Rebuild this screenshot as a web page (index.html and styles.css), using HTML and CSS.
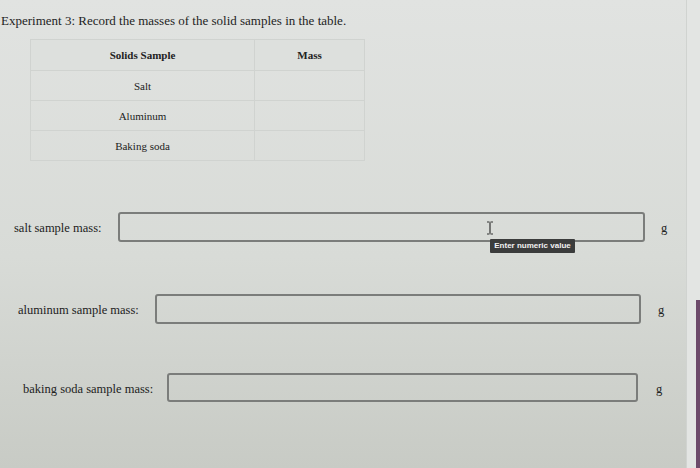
FILE: index.html
```html
<!DOCTYPE html>
<html lang="en">

<head>
    <meta charset="utf8">
    <title>Experiment 3</title>
    <link rel="stylesheet" href="styles.css">
</head>

<body>
    <div class="page">
        <div class="content">
            <p class="title">Experiment 3: Record the masses of the solid samples in the table.</p>

            <table class="samples">
                <tr>
                    <th class="col-sample">Solids Sample</th>
                    <th>Mass</th>
                </tr>
                <tr>
                    <td>Salt</td>
                    <td></td>
                </tr>
                <tr>
                    <td>Aluminum</td>
                    <td></td>
                </tr>
                <tr>
                    <td>Baking soda</td>
                    <td></td>
                </tr>
            </table>

            <div class="mass-row salt">
                <label class="mass-label">salt sample mass:</label>
                <div class="field">
                    <input type="text" class="mass-input">
                    <svg class="ibeam" width="8" height="14" viewBox="0 0 8 14">
                        <path d="M1 1h2.5M4.5 1H7M4 1.5v11M1 13h2.5M4.5 13H7" stroke="#333" stroke-width="1.2" fill="none"/>
                    </svg>
                    <div class="tooltip">Enter numeric value</div>
                </div>
                <span class="unit">g</span>
            </div>

            <div class="mass-row aluminum">
                <label class="mass-label">aluminum sample mass:</label>
                <div class="field">
                    <input type="text" class="mass-input">
                </div>
                <span class="unit">g</span>
            </div>

            <div class="mass-row soda">
                <label class="mass-label">baking soda sample mass:</label>
                <div class="field">
                    <input type="text" class="mass-input">
                </div>
                <span class="unit">g</span>
            </div>
        </div>
        <div class="scroll-strip">
            <div class="strip-edge"></div>
        </div>
    </div>
</body>

</html>
```

FILE: styles.css
```css
* {
    box-sizing: border-box;
}

body {
    margin: 0;
    font-family: "Liberation Serif", "Times New Roman", serif;
    color: #222;
}

div.page {
    display: flex;
    width: 700px;
    height: 468px;
    overflow: hidden;
    background: linear-gradient(180deg, #e1e3e1 0%, #d8dbd7 55%, #c8cbc5 100%);
}

div.content {
    flex-grow: 1;
    display: flex;
    flex-direction: column;
}

p.title {
    margin: 0;
    padding: 13px 0 0 1px;
    font-size: 13px;
    line-height: 16px;
    color: #1e1e1e;
}

table.samples {
    margin: 10px 0 0 30px;
    width: 335px;
    border-collapse: collapse;
    font-size: 11px;
}

table.samples th,
table.samples td {
    border: 1px solid #d0d3d0;
    text-align: center;
    padding: 0;
    height: 30px;
}

table.samples th {
    height: 31px;
    font-weight: bold;
    background-color: #dde0dd;
}

table.samples th.col-sample {
    width: 224px;
}

div.mass-row {
    display: flex;
    align-items: center;
}

label.mass-label {
    font-size: 12.5px;
    padding-top: 3px;
    flex-shrink: 0;
}

div.field {
    position: relative;
}

input.mass-input {
    display: block;
    height: 30px;
    border: 2px solid #7b7d7b;
    border-radius: 3px;
    background-color: transparent;
}

span.unit {
    font-size: 12.5px;
    padding-top: 3px;
}

div.mass-row.salt {
    margin-top: 51px;
    padding-left: 14px;
}

div.mass-row.salt label.mass-label {
    width: 104px;
}

div.mass-row.salt input.mass-input {
    width: 527px;
}

div.mass-row.salt span.unit {
    margin-left: 16px;
}

div.mass-row.aluminum {
    margin-top: 52px;
    padding-left: 18px;
}

div.mass-row.aluminum label.mass-label {
    width: 137px;
}

div.mass-row.aluminum input.mass-input {
    width: 486px;
}

div.mass-row.aluminum span.unit {
    margin-left: 17px;
}

div.mass-row.soda {
    margin-top: 49px;
    padding-left: 23px;
}

div.mass-row.soda label.mass-label {
    width: 144px;
}

div.mass-row.soda input.mass-input {
    width: 471px;
    height: 29px;
}

div.mass-row.soda span.unit {
    margin-left: 18px;
}

svg.ibeam {
    position: absolute;
    left: 368px;
    top: 9px;
}

div.tooltip {
    position: absolute;
    left: 372px;
    top: 27px;
    width: 85px;
    height: 14px;
    background-color: #3b3c3c;
    color: #f2f2f2;
    font-family: "Liberation Sans", Arial, sans-serif;
    font-size: 8px;
    font-weight: bold;
    line-height: 14px;
    text-align: center;
    border-radius: 1px;
}

div.scroll-strip {
    width: 14px;
    flex-shrink: 0;
    display: flex;
    flex-direction: column;
    justify-content: flex-end;
    background-color: #e3e5e3;
    border-left: 1px solid #d0d3d0;
}

div.strip-edge {
    margin-left: auto;
    width: 4px;
    height: 168px;
    background-color: #6d4a6a;
}
```
